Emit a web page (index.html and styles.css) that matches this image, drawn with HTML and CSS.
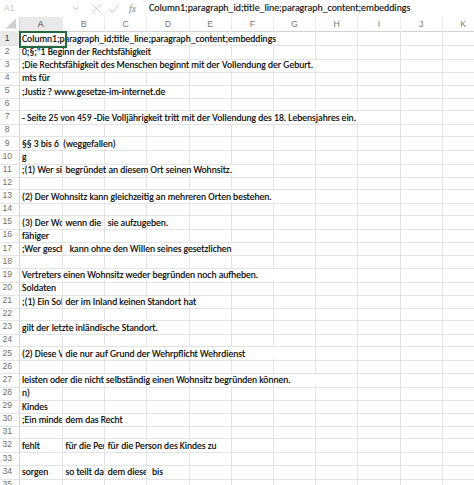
FILE: index.html
```html
<!DOCTYPE html>
<html lang="de">
<head>
<meta charset="utf-8">
<title>Sheet</title>
<link rel="stylesheet" href="styles.css">
</head>
<body>
<div class="app">
  <div class="fbar">
    <div class="namebox">
      <span class="ref">A1</span>
      <svg class="chev" width="7" height="5" viewBox="0 0 7 5"><path d="M1 1l2.5 2.5L6 1" fill="none" stroke="#c4c4c4" stroke-width="1"/></svg>
    </div>
    <div class="fbtns">
      <svg class="ic" width="11" height="11" viewBox="0 0 11 11"><path d="M1.5 1.5l8 8M9.5 1.5l-8 8" fill="none" stroke="#c9c9c9" stroke-width="1"/></svg>
      <svg class="ic" width="12" height="11" viewBox="0 0 12 11"><path d="M1 5.5l3.5 4L11 1.5" fill="none" stroke="#c9c9c9" stroke-width="1"/></svg>
      <span class="fx">fx</span>
    </div>
    <div class="ftext">Column1;paragraph_id;title_line;paragraph_content;embeddings</div>
  </div>

  <div class="sheet">
    <div class="r hdr"><b class="corner"><svg width="13" height="11" viewBox="0 0 13 11"><path d="M12 0.5V10.5H1.5Z" fill="#cfcfcf"/></svg></b><i class="hsel">A</i><i>B</i><i>C</i><i>D</i><i>E</i><i>F</i><i>G</i><i>H</i><i>I</i><i>J</i><i>K</i></div>
    <div class="r"><b class="rsel">1</b><span class="c s7 active">Column1;paragraph_id;title_line;paragraph_content;embeddings</span><i></i><i></i><i></i><i></i></div>
    <div class="r"><b>2</b><span class="c s4">0;§;"1 Beginn der Rechtsfähigkeit</span><i></i><i></i><i></i><i></i><i></i><i></i><i></i></div>
    <div class="r"><b>3</b><span class="c s8">;Die Rechtsfähigkeit des Menschen beginnt mit der Vollendung der Geburt.</span><i></i><i></i><i></i></div>
    <div class="r"><b>4</b><span class="c">mts für</span><i></i><i></i><i></i><i></i><i></i><i></i><i></i><i></i><i></i><i></i></div>
    <div class="r"><b>5</b><span class="c s4">;Justiz ? www.gesetze-im-internet.de</span><i></i><i></i><i></i><i></i><i></i><i></i><i></i></div>
    <div class="r"><b>6</b><i></i><i></i><i></i><i></i><i></i><i></i><i></i><i></i><i></i><i></i><i></i></div>
    <div class="r"><b>7</b><span class="c s9">- Seite 25 von 459 -Die Volljährigkeit tritt mit der Vollendung des 18. Lebensjahres ein.</span><i></i><i></i></div>
    <div class="r"><b>8</b><i></i><i></i><i></i><i></i><i></i><i></i><i></i><i></i><i></i><i></i><i></i></div>
    <div class="r"><b>9</b><span class="c s3">§§ 3 bis 6  (weggefallen)</span><i></i><i></i><i></i><i></i><i></i><i></i><i></i><i></i></div>
    <div class="r"><b>10</b><span class="c">g</span><i></i><i></i><i></i><i></i><i></i><i></i><i></i><i></i><i></i><i></i></div>
    <div class="r"><b>11</b><span class="c">;(1) Wer sich an einem Orte ständig niederlässt,</span><span class="c s5">begründet an diesem Ort seinen Wohnsitz.</span><i></i><i></i><i></i><i></i><i></i></div>
    <div class="r"><b>12</b><i></i><i></i><i></i><i></i><i></i><i></i><i></i><i></i><i></i><i></i><i></i></div>
    <div class="r"><b>13</b><span class="c s7">(2) Der Wohnsitz kann gleichzeitig an mehreren Orten bestehen.</span><i></i><i></i><i></i><i></i></div>
    <div class="r"><b>14</b><i></i><i></i><i></i><i></i><i></i><i></i><i></i><i></i><i></i><i></i><i></i></div>
    <div class="r"><b>15</b><span class="c">(3) Der Wohnsitz wird aufgehoben,</span><span class="c">wenn die Niederlassung mit dem Willen aufgehoben wird,</span><span class="c s2">sie aufzugeben.</span><i></i><i></i><i></i><i></i><i></i><i></i><i></i></div>
    <div class="r"><b>16</b><span class="c">fähiger</span><i></i><i></i><i></i><i></i><i></i><i></i><i></i><i></i><i></i><i></i></div>
    <div class="r"><b>17</b><span class="c">;Wer geschäftsunfähig ist,</span><span class="c s5">  kann ohne den Willen seines gesetzlichen</span><i></i><i></i><i></i><i></i><i></i></div>
    <div class="r"><b>18</b><i></i><i></i><i></i><i></i><i></i><i></i><i></i><i></i><i></i><i></i><i></i></div>
    <div class="r"><b>19</b><span class="c s7">Vertreters einen Wohnsitz weder begründen noch aufheben.</span><i></i><i></i><i></i><i></i></div>
    <div class="r"><b>20</b><span class="c">Soldaten</span><i></i><i></i><i></i><i></i><i></i><i></i><i></i><i></i><i></i><i></i></div>
    <div class="r"><b>21</b><span class="c">;(1) Ein Soldat hat seinen Wohnsitz am Standort.</span><span class="c s4">der im Inland keinen Standort hat</span><i></i><i></i><i></i><i></i><i></i><i></i></div>
    <div class="r"><b>22</b><i></i><i></i><i></i><i></i><i></i><i></i><i></i><i></i><i></i><i></i><i></i></div>
    <div class="r"><b>23</b><span class="c s4">gilt der letzte inländische Standort.</span><i></i><i></i><i></i><i></i><i></i><i></i><i></i></div>
    <div class="r"><b>24</b><i></i><i></i><i></i><i></i><i></i><i></i><i></i><i></i><i></i><i></i><i></i></div>
    <div class="r"><b>25</b><span class="c">(2) Diese Vorschrift findet keine Anwendung auf Soldaten,</span><span class="c s6">die nur auf Grund der Wehrpflicht Wehrdienst</span><i></i><i></i><i></i><i></i></div>
    <div class="r"><b>26</b><i></i><i></i><i></i><i></i><i></i><i></i><i></i><i></i><i></i><i></i><i></i></div>
    <div class="r"><b>27</b><span class="c s8">leisten oder die nicht selbständig einen Wohnsitz begründen können.</span><i></i><i></i><i></i></div>
    <div class="r"><b>28</b><span class="c">n)</span><i></i><i></i><i></i><i></i><i></i><i></i><i></i><i></i><i></i><i></i></div>
    <div class="r"><b>29</b><span class="c">Kindes</span><i></i><i></i><i></i><i></i><i></i><i></i><i></i><i></i><i></i><i></i></div>
    <div class="r"><b>30</b><span class="c">;Ein minderjähriges Kind teilt den Wohnsitz der Eltern;</span><span class="c s2">dem das Recht</span><i></i><i></i><i></i><i></i><i></i><i></i><i></i><i></i></div>
    <div class="r"><b>31</b><i></i><i></i><i></i><i></i><i></i><i></i><i></i><i></i><i></i><i></i><i></i></div>
    <div class="r"><b>32</b><span class="c">fehlt</span><span class="c">für die Person des Kindes</span><span class="c s3">für die Person des Kindes zu</span><i></i><i></i><i></i><i></i><i></i><i></i></div>
    <div class="r"><b>33</b><i></i><i></i><i></i><i></i><i></i><i></i><i></i><i></i><i></i><i></i><i></i></div>
    <div class="r"><b>34</b><span class="c">sorgen</span><span class="c">so teilt das Kind den Wohnsitz des Elternteils,</span><span class="c">dem dieses Recht zusteht,</span><span class="c"> bis</span><i></i><i></i><i></i><i></i><i></i><i></i><i></i></div>
    <div class="r"><b>35</b><i></i><i></i><i></i><i></i><i></i><i></i><i></i><i></i><i></i><i></i><i></i></div>
  </div>
</div>
</body>
</html>
```

FILE: styles.css
```css
* {
  box-sizing: border-box;
  margin: 0;
  padding: 0;
}

html, body {
  width: 474px;
  height: 485px;
  overflow: hidden;
  background: #ffffff;
}

body {
  font-family: Carlito, "Liberation Sans", sans-serif;
  color: #000000;
}

.app {
  width: 474px;
  height: 485px;
  overflow: hidden;
}

/* formula bar */
.fbar {
  height: 16.5px;
  display: flex;
  align-items: center;
  white-space: nowrap;
}

.namebox {
  width: 84px;
  height: 13px;
  display: flex;
  align-items: center;
  justify-content: space-between;
  padding: 0 5px 0 4px;
}

.ref {
  font-family: "Liberation Sans", sans-serif;
  font-size: 8.5px;
  color: #c2c2c2;
}

.chev {
  display: block;
}

.fbtns {
  display: flex;
  align-items: center;
  gap: 6px;
  padding-left: 7px;
  width: 64px;
}

.ic {
  display: block;
}

.fx {
  font-family: "Liberation Serif", serif;
  font-style: italic;
  font-size: 10px;
  color: #8c8c8c;
  margin-left: 3px;
}

.ftext {
  font-size: 9.9px;
  color: #111111;
  padding-left: 1px;
  -webkit-text-stroke: 0.15px #111111;
}

/* sheet */
.sheet {
  width: 485px;
}

.r {
  display: grid;
  grid-template-columns: 19.5px 43.5px repeat(10, 42.2px);
  height: 13.14px;
}

.r > * {
  font-style: normal;
  font-weight: normal;
  border-right: 1px solid #e4e4e4;
  border-bottom: 1px solid #e4e4e4;
  min-width: 0;
}

.r > b {
  font-family: "Liberation Sans", sans-serif;
  font-size: 8.6px;
  line-height: 13px;
  padding-top: 0.5px;
  color: #707070;
  text-align: center;
  padding-right: 4px;
  border-right-color: #d6d6d6;
}

.r > b.rsel {
  background: #e9e9e9;
  color: #3a3a3a;
}

.c {
  white-space: pre;
  overflow-x: clip;
  overflow-y: visible;
  font-size: 9.6px;
  line-height: 12.4px;
  padding-left: 2.5px;
  padding-top: 2px;
  -webkit-text-stroke: 0.15px #000000;
}

.s2 { grid-column: span 2; }
.s3 { grid-column: span 3; }
.s4 { grid-column: span 4; }
.s5 { grid-column: span 5; }
.s6 { grid-column: span 6; }
.s7 { grid-column: span 7; }
.s8 { grid-column: span 8; }
.s9 { grid-column: span 9; }

.active {
  position: relative;
  overflow: visible;
}

.active::after {
  content: "";
  position: absolute;
  left: -1px;
  top: -0.5px;
  width: 44.5px;
  height: 13.64px;
  border: 2px solid #23683f;
}

/* header row */
.r.hdr {
  height: 14.5px;
}

.hdr > i {
  font-family: "Liberation Sans", sans-serif;
  font-size: 8.8px;
  line-height: 14px;
  color: #7a7a7a;
  text-align: center;
  border-right: 1px solid #ececec;
  border-bottom: 1px solid #d3d3d3;
}

.hdr > i.hsel {
  background: #e9e9e9;
  color: #3a3a3a;
  border-bottom: 1px solid #23683f;
}

.hdr > b.corner {
  display: flex;
  align-items: flex-end;
  justify-content: flex-end;
  padding: 0 2px 2px 0;
  border-bottom: 1px solid #d3d3d3;
}

.corner svg {
  display: block;
}
```
